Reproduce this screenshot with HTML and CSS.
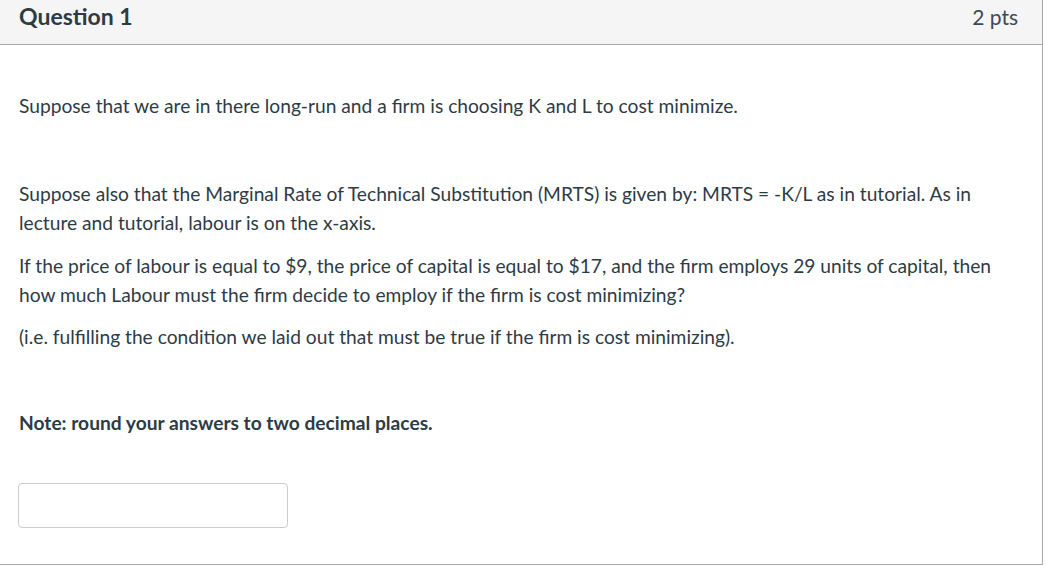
FILE: index.html
```html
<!DOCTYPE html>
<html>
<head>
<meta charset="utf-8">
<link rel="stylesheet" href="styles.css">
</head>
<body>
<div class="card">
  <div class="header">
    <span class="title">Question 1</span>
    <span class="pts">2 pts</span>
  </div>
  <div class="content">
    <p>Suppose that we are in there long-run and a firm is choosing K and L to cost minimize.</p>
    <p class="blank first">&nbsp;</p>
    <p>Suppose also that the Marginal Rate of Technical Substitution (MRTS) is given by: MRTS = -K/L as in tutorial. As in lecture and tutorial, labour is on the x-axis.</p>
    <p class="tight">If the price of labour is equal to $9, the price of capital is equal to $17, and the firm employs 29 units of capital, then how much Labour must the firm decide to employ if the firm is cost minimizing?</p>
    <p>(i.e. fulfilling the condition we laid out that must be true if the firm is cost minimizing).</p>
    <p class="blank">&nbsp;</p>
    <p class="note">Note: round your answers to two decimal places.</p>
    <input class="answer" type="text">
  </div>
</div>
</body>
</html>
```
FILE: styles.css
```css
html, body {
  margin: 0;
  padding: 0;
  background: #fff;
}
body {
  font-family: Lato, "Noto Sans", sans-serif;
  color: #2d3b45;
}
.card {
  margin-left: -1px;
  width: 1044px;
  border: 1px solid #a9a9a9;
  border-top: none;
  box-sizing: border-box;
}
.header {
  display: flex;
  justify-content: space-between;
  align-items: center;
  height: 45px;
  box-sizing: border-box;
  padding: 0 24px 0 19px;
  background: #f5f5f5;
  border-bottom: 1px solid #a9a9a9;
}
.title {
  font-size: 23px;
  font-weight: 700;
  margin-top: -12px;
}
.pts {
  font-size: 21px;
  font-weight: 400;
  color: #3d4a53;
  margin-top: -12px;
}
.content {
  padding: 46px 20px 36px 19px;
}
.content p {
  margin: 0 0 14px 0;
  font-size: 19.2px;
  line-height: 29px;
}
.content p.first {
  margin-bottom: 16px;
}
.content p.tight {
  margin-bottom: 13px;
}
.note {
  font-weight: 700;
}
.answer {
  display: block;
  margin: 46px 0 0 -1px;
  width: 270px;
  height: 45px;
  box-sizing: border-box;
  border: 1px solid #c7cdd1;
  border-radius: 4px;
  background: #fff;
  font-family: Lato, sans-serif;
  font-size: 16px;
  outline: none;
}
```
